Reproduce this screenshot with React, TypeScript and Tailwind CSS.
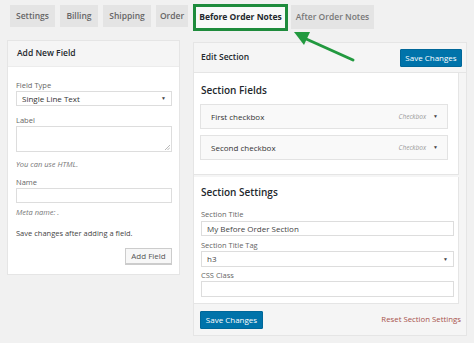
import React from 'react';

const FONT = { fontFamily: '"Open Sans", "Liberation Sans", Arial, sans-serif' };

const TABS = [
  { name: 'Settings', w: 'w-[45px]' },
  { name: 'Billing', w: 'w-[38px]' },
  { name: 'Shipping', w: 'w-[48px]' },
  { name: 'Order', w: 'w-[32px]' },
];

function Caret() {
  return <span className="text-[5px] text-[#444] leading-none">▼</span>;
}

function FieldLabel({ children, className = '' }: { children: React.ReactNode; className?: string }) {
  return <div className={`text-[7.5px] leading-[12px] text-[#666] ${className}`}>{children}</div>;
}

// ── Left panel ────────────────────────────────────────────────────────────────
function AddNewField() {
  return (
    <div className="w-[173px] bg-white border border-[#e5e5e5]">
      <div className="h-[26px] bg-[#f5f5f5] border-b border-[#ececec] px-[9px] flex items-center text-[8.5px] font-semibold text-[#23282d]">
        Add New Field
      </div>
      <div className="pl-[8px] pr-[7px] pt-[12px] pb-[10px] flex flex-col">
        <FieldLabel>Field Type</FieldLabel>
        <div className="h-[15px] border border-[#ddd] px-[5px] flex items-center justify-between text-[8px] text-[#333]">
          <span>Single Line Text</span>
          <Caret />
        </div>
        <FieldLabel className="mt-[8px]">Label</FieldLabel>
        <div className="relative h-[26px] border border-[#ddd]">
          <svg className="absolute right-[1px] bottom-[1px]" width="5" height="5" viewBox="0 0 5 5">
            <path d="M5 0 L0 5 M5 2.5 L2.5 5" stroke="#999" strokeWidth="0.7" />
          </svg>
        </div>
        <div className="mt-[6px] text-[7.5px] leading-[12px] italic text-[#777]">You can use HTML.</div>
        <FieldLabel className="mt-[6px]">Name</FieldLabel>
        <div className="h-[15px] border border-[#ddd]" />
        <div className="mt-[3px] text-[7.5px] leading-[12px] italic text-[#777]">Meta name: .</div>
        <div className="mt-[9px] text-[7.5px] leading-[12px] text-[#444]">Save changes after adding a field.</div>
        <div className="mt-[9px] flex justify-end">
          <button className="w-[47px] h-[16px] bg-[#f7f7f7] border border-[#ccc] shadow-[0_1px_0_#ccc] text-[8px] text-[#555] flex items-center justify-center">
            Add Field
          </button>
        </div>
      </div>
    </div>
  );
}

// ── Right panel ───────────────────────────────────────────────────────────────
function FieldRow({ name }: { name: string }) {
  return (
    <div className="h-[25px] bg-[#f9f9f9] border border-[#e3e3e3] pl-[10px] pr-[9px] flex items-center justify-between">
      <span className="text-[8px] text-[#333]">{name}</span>
      <span className="flex items-center gap-[7px]">
        <span className="text-[6.5px] italic text-[#999]">Checkbox</span>
        <Caret />
      </span>
    </div>
  );
}

function EditSection() {
  return (
    <div className="w-[274px] mt-[2px] border border-[#e5e5e5] bg-[#f5f5f5]">
      <div className="h-[30px] border-b border-[#e5e5e5] pl-[7px] pr-[4px] flex items-center justify-between">
        <span className="text-[8.5px] font-semibold text-[#23282d]">Edit Section</span>
        <button className="w-[62px] h-[18px] bg-[#0073aa] border border-[#006799] rounded-[1px] text-[8px] text-white flex items-center justify-center">
          Save Changes
        </button>
      </div>

      {/* Section fields */}
      <div className="mr-[7px] bg-white border-r border-b border-[#e5e5e5] pl-[6px] pt-[10px] pb-[14px] pr-[10px]">
        <div className="pl-[1px] text-[10px] leading-[14px] font-semibold text-[#23282d]">Section Fields</div>
        <div className="mt-[7px] flex flex-col gap-[6px]">
          <FieldRow name="First checkbox" />
          <FieldRow name="Second checkbox" />
        </div>
      </div>

      {/* Section settings */}
      <div className="mt-[2px] mr-[7px] bg-white border-r border-b border-[#e5e5e5] pl-[7px] pr-[4px] pt-[8px] pb-[6px] flex flex-col">
        <div className="text-[10px] leading-[14px] font-semibold text-[#23282d]">Section Settings</div>
        <FieldLabel className="mt-[9px]">Section Title</FieldLabel>
        <div className="mt-[1px] h-[15px] border border-[#ddd] px-[5px] flex items-center text-[8px] text-[#444]">
          My Before Order Section
        </div>
        <FieldLabel className="mt-[3px]">Section Title Tag</FieldLabel>
        <div className="h-[16px] border border-[#ddd] px-[5px] flex items-center justify-between text-[8px] text-[#444]">
          <span>h3</span>
          <Caret />
        </div>
        <FieldLabel className="mt-[2px]">CSS Class</FieldLabel>
        <div className="h-[16px] border border-[#ddd]" />
      </div>

      {/* Footer */}
      <div className="pl-[6px] pr-[5px] pt-[7px] pb-[6px] flex items-center justify-between">
        <button className="w-[63px] h-[18px] bg-[#0073aa] border border-[#006799] rounded-[1px] text-[8px] text-white flex items-center justify-center">
          Save Changes
        </button>
        <span className="text-[7.8px] text-[#a8524c]">Reset Section Settings</span>
      </div>
    </div>
  );
}

// ── Main ──────────────────────────────────────────────────────────────────────
export default function App() {
  return (
    <div className="relative w-[474px] h-[343px] overflow-hidden bg-[#f1f1f1]" style={FONT}>
      {/* Tabs */}
      <div className="flex items-start pl-[10px] pt-[4px]">
        {TABS.map((t) => (
          <div
            key={t.name}
            className={`${t.w} mr-[5px] mt-[1px] h-[22px] bg-[#e4e4e4] flex items-center justify-center text-[8.5px] font-semibold text-[#666]`}
          >
            {t.name}
          </div>
        ))}
        <div className="w-[95px] h-[27px] border-[3px] border-[#1e8b3c] bg-[#f9f9f9] flex items-center justify-center text-[8.5px] font-bold text-[#23282d]">
          Before Order Notes
        </div>
        <div className="ml-[3px] mt-[1px] w-[83px] h-[24px] bg-[#e4e4e4] flex items-center justify-center text-[8.5px] font-semibold text-[#777]">
          After Order Notes
        </div>
      </div>

      {/* Panels */}
      <div className="mt-[9px] pl-[7px] flex items-start gap-[13px]">
        <AddNewField />
        <EditSection />
      </div>

      {/* Callout arrow */}
      <svg className="absolute left-0 top-0 pointer-events-none" width="474" height="343">
        <line x1="353" y1="60" x2="304" y2="38" stroke="#22993f" strokeWidth="3" strokeLinecap="round" />
        <polygon points="294,32 310,32 304,45" fill="#22993f" />
      </svg>
    </div>
  );
}
